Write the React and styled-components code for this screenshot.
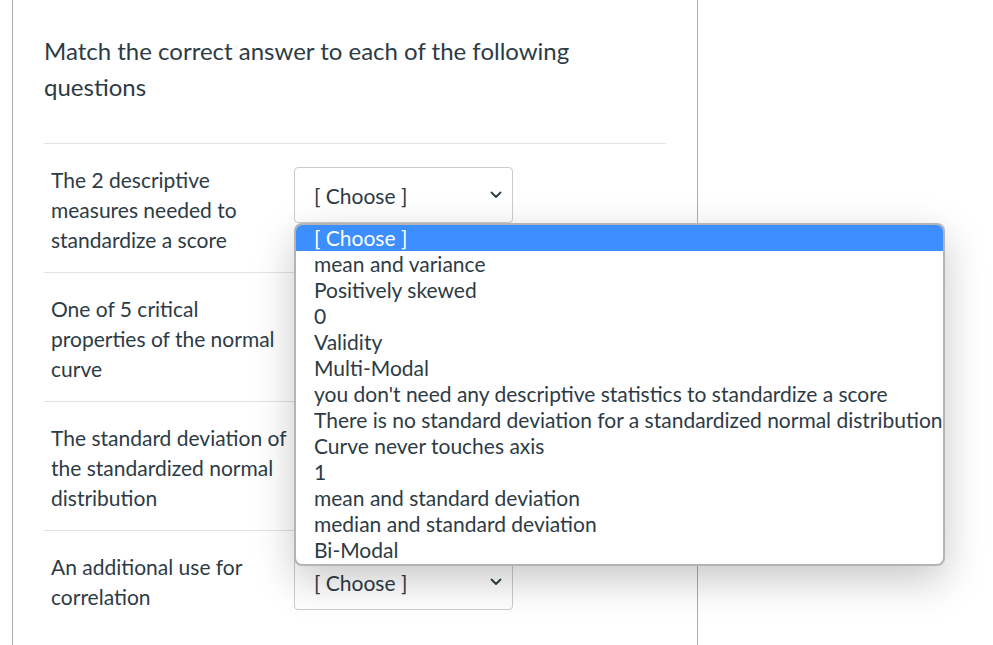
import styled, { createGlobalStyle } from 'styled-components';

const GlobalStyle = createGlobalStyle`
  body {
    margin: 0;
    background: #fff;
    font-family: Lato, "Noto Sans", sans-serif;
    color: #2d3b45;
  }
`;

const questions = [
  'The 2 descriptive measures needed to standardize a score',
  'One of 5 critical properties of the normal curve',
  'The standard deviation of the standardized normal distribution',
  'An additional use for correlation',
];

const options = [
  '[ Choose ]',
  'mean and variance',
  'Positively skewed',
  '0',
  'Validity',
  'Multi-Modal',
  "you don't need any descriptive statistics to standardize a score",
  'There is no standard deviation for a standardized normal distribution',
  'Curve never touches axis',
  '1',
  'mean and standard deviation',
  'median and standard deviation',
  'Bi-Modal',
];

function Chevron() {
  return (
    <svg width="12" height="8" viewBox="0 0 12 8" fill="none">
      <path d="M1.5 1.5 6 6l4.5-4.5" stroke="#2d3b45" strokeWidth="1.8" strokeLinecap="round" strokeLinejoin="round" />
    </svg>
  );
}

function App() {
  return (
    <Page>
      <GlobalStyle />
      <Panel>
        <Title>Match the correct answer to each of the following questions</Title>
        <Rule />
        <List>
          {questions.map((q, i) => (
            <Row key={i} $last={i === questions.length - 1}>
              <Question>{q}</Question>
              <SelectWrap>
                <Select>
                  <span>[ Choose ]</span>
                  <Chevron />
                </Select>
                {i === 0 && (
                  <Listbox>
                    {options.map((o, j) => (
                      <Option key={j} $active={j === 0}>{o}</Option>
                    ))}
                  </Listbox>
                )}
              </SelectWrap>
            </Row>
          ))}
        </List>
      </Panel>
    </Page>
  );
}

const Page = styled.div`
  height: 645px;
  overflow: hidden;
  padding-left: 12px;
`;

const Panel = styled.div`
  width: 622px;
  height: 100%;
  padding: 33px 31px 0;
  border-left: 1px solid #a5afb5;
  border-right: 1px solid #a5afb5;
`;

const Title = styled.div`
  font-size: 24px;
  line-height: 36px;
  width: 560px;
`;

const Rule = styled.div`
  height: 1px;
  background: #dfe3e6;
  margin-top: 38px;
`;

const List = styled.div`
  display: flex;
  flex-direction: column;
`;

const Row = styled.div`
  display: flex;
  align-items: flex-start;
  gap: 5px;
  padding: 21px 0 17px 7px;
  border-bottom: ${(p) => (p.$last ? 'none' : '1px solid #dfe3e6')};
`;

const Question = styled.div`
  width: 238px;
  font-size: 21px;
  line-height: 30px;
`;

const SelectWrap = styled.div`
  position: relative;
  margin-top: 2px;
`;

const Select = styled.div`
  box-sizing: border-box;
  width: 219px;
  height: 56px;
  display: flex;
  align-items: center;
  justify-content: space-between;
  padding: 0 10px 0 19px;
  border: 1px solid #c7cdd1;
  border-radius: 4px;
  background: #fff;
  font-size: 21px;
  color: #2d3b45;
`;

const Listbox = styled.div`
  position: absolute;
  top: 56px;
  left: 0;
  z-index: 2;
  padding-bottom: 1px;
  background: #fff;
  border: 2px solid #b4b4b4;
  border-radius: 8px;
  overflow: hidden;
  box-shadow: 0 14px 40px rgba(0, 0, 0, 0.22);
  white-space: nowrap;
`;

const Option = styled.div`
  font-size: 21px;
  line-height: 26px;
  padding: 0 0 0 18px;
  color: ${(p) => (p.$active ? '#fff' : '#2d3b45')};
  background: ${(p) => (p.$active ? '#3d8eff' : 'transparent')};
`;

export default App;
